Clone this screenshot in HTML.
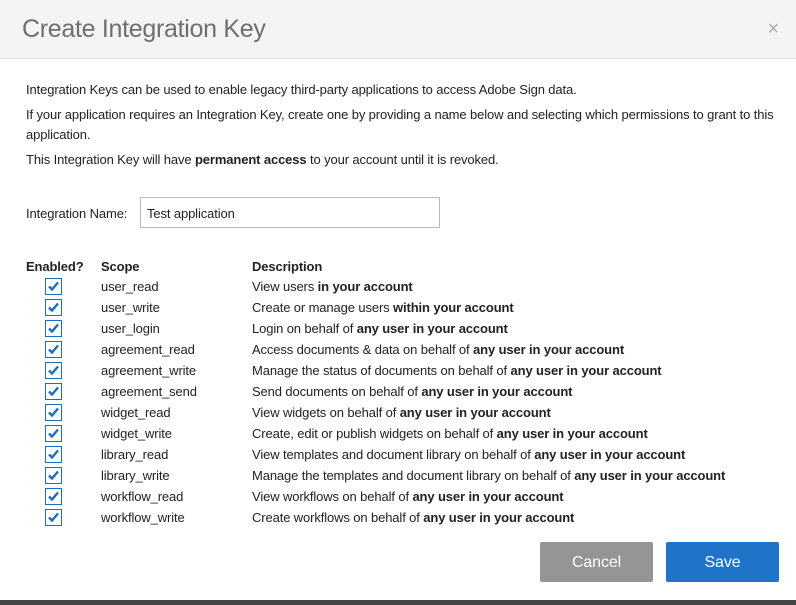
<!DOCTYPE html><html><head><style>
body{margin:0;width:796px;height:605px;overflow:hidden;background:#fff;font-family:"Liberation Sans",sans-serif;font-size:13px;letter-spacing:-0.12px;color:#222;position:relative}
.hdr{position:absolute;left:0;top:0;width:796px;height:58px;background:#f4f4f4;border-bottom:1px solid #ddd}
.hdr h1{margin:0;position:absolute;left:22px;top:15px;font-weight:normal;font-size:25px;color:#6e6e6e;letter-spacing:-0.3px}
.x{position:absolute;right:17px;top:18px;font-size:20px;color:#aaa}
.t{position:absolute;left:26px;white-space:nowrap}
.inp{position:absolute;left:140px;top:197px;width:300px;height:31px;border:1px solid #bbb;box-sizing:border-box;padding:8px 6px;font-size:13px}
.row{position:absolute;left:0;height:21px;width:796px}
.cb{position:absolute;left:45px;top:2px;width:15px;height:15px;border:1px solid #1b6ec2;background:#fff}
.sc{position:absolute;left:101px;top:3px}
.de{position:absolute;left:252px;top:3px;white-space:nowrap}
.btn{position:absolute;top:542px;width:113px;height:40px;border-radius:2px;color:#fff;font-size:16px;text-align:center;line-height:42px}
</style></head><body>
<div class="hdr"><h1>Create Integration Key</h1><div class="x">×</div></div>
<div class="t" style="top:82px">Integration Keys can be used to enable legacy third-party applications to access Adobe Sign data.</div>
<div class="t" style="top:107px">If your application requires an Integration Key, create one by providing a name below and selecting which permissions to grant to this</div>
<div class="t" style="top:127px">application.</div>
<div class="t" style="top:152px">This Integration Key will have <b>permanent access</b> to your account until it is revoked.</div>
<div class="t" style="top:206px">Integration Name:</div>
<div class="inp">Test application</div>
<div class="row" style="top:256px"><b style="position:absolute;left:26px;top:3px">Enabled?</b><b class="sc">Scope</b><b class="de">Description</b></div>
<div id="rows"></div>
<div class="btn" style="left:540px;background:#959595">Cancel</div>
<div class="btn" style="left:666px;background:#1f73c8">Save</div>
<div style="position:absolute;left:0;top:600px;width:796px;height:5px;background:#444"></div>
<script>
var d=[["user_read","View users <b>in your account</b>"],["user_write","Create or manage users <b>within your account</b>"],["user_login","Login on behalf of <b>any user in your account</b>"],["agreement_read","Access documents &amp; data on behalf of <b>any user in your account</b>"],["agreement_write","Manage the status of documents on behalf of <b>any user in your account</b>"],["agreement_send","Send documents on behalf of <b>any user in your account</b>"],["widget_read","View widgets on behalf of <b>any user in your account</b>"],["widget_write","Create, edit or publish widgets on behalf of <b>any user in your account</b>"],["library_read","View templates and document library on behalf of <b>any user in your account</b>"],["library_write","Manage the templates and document library on behalf of <b>any user in your account</b>"],["workflow_read","View workflows on behalf of <b>any user in your account</b>"],["workflow_write","Create workflows on behalf of <b>any user in your account</b>"]];
var h="";d.forEach(function(r,i){h+='<div class="row" style="top:'+(276+i*21)+'px"><div class="cb"><svg width="15" height="15" viewBox="0 0 15 15" style="position:absolute;left:0;top:0"><path d="M3 7.5L6 10.5L12 3.5" stroke="#1b6ec2" stroke-width="2.4" fill="none"/></svg></div><span class="sc">'+r[0]+'</span><span class="de">'+r[1]+'</span></div>'});
document.getElementById("rows").innerHTML=h;
</script>
</body></html>
